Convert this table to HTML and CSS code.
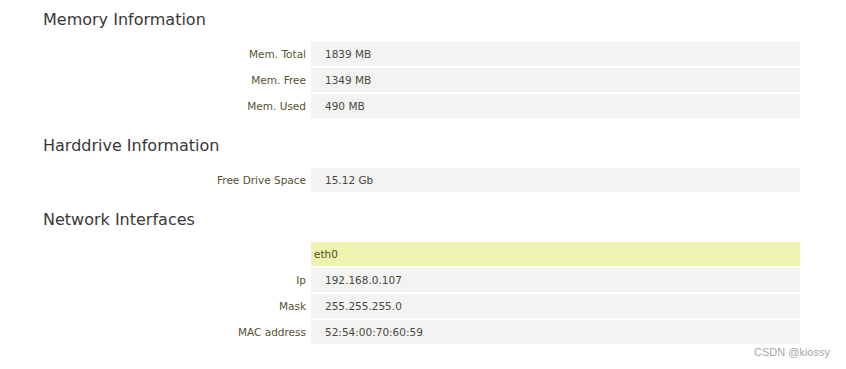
FILE: index.html
```html
<!DOCTYPE html>
<html lang="en">
<head>
<meta charset="utf-8">
<title>System Information</title>
<link rel="stylesheet" href="styles.css">
</head>
<body>
<div class="page">
  <section class="section">
    <h2 class="heading">Memory Information</h2>
    <div class="rows">
      <div class="row"><div class="label">Mem. Total</div><div class="value">1839 MB</div></div>
      <div class="row"><div class="label">Mem. Free</div><div class="value">1349 MB</div></div>
      <div class="row"><div class="label">Mem. Used</div><div class="value">490 MB</div></div>
    </div>
  </section>
  <section class="section">
    <h2 class="heading">Harddrive Information</h2>
    <div class="rows">
      <div class="row"><div class="label">Free Drive Space</div><div class="value">15.12 Gb</div></div>
    </div>
  </section>
  <section class="section">
    <h2 class="heading">Network Interfaces</h2>
    <div class="rows">
      <div class="row"><div class="label"></div><div class="value iface">eth0</div></div>
      <div class="row"><div class="label">Ip</div><div class="value">192.168.0.107</div></div>
      <div class="row"><div class="label">Mask</div><div class="value">255.255.255.0</div></div>
      <div class="row"><div class="label">MAC address</div><div class="value">52:54:00:70:60:59</div></div>
    </div>
  </section>
</div>
<div class="watermark">CSDN @kiossy</div>
</body>
</html>
```
FILE: styles.css
```css
html, body {
  margin: 0;
  padding: 0;
  background: #ffffff;
}
body {
  font-family: "DejaVu Sans", Verdana, sans-serif;
  position: relative;
  width: 846px;
  height: 369px;
  overflow: hidden;
}
.page {
  padding: 10px 0 0 43px;
}
.section {
  margin: 0 0 18px 0;
}
.heading {
  margin: 0;
  font-size: 16px;
  line-height: 20px;
  font-weight: normal;
  color: #383838;
}
.rows {
  margin-top: 12px;
  display: flex;
  flex-direction: column;
  gap: 2px;
}
.row {
  display: grid;
  grid-template-columns: 268px 489px;
  height: 24px;
}
.label {
  font-size: 10.5px;
  line-height: 24px;
  text-align: right;
  padding-right: 5px;
  color: #57522f;
  white-space: nowrap;
}
.value {
  background: #f3f3f3;
  font-size: 10.5px;
  line-height: 24px;
  padding-left: 14px;
  color: #4a4838;
  white-space: nowrap;
}
.value.iface {
  background: #eef3b0;
  padding-left: 3px;
  color: #4f4c2e;
}
.watermark {
  position: absolute;
  left: 754px;
  top: 346px;
  font-family: "Liberation Sans", Arial, sans-serif;
  font-size: 11px;
  line-height: 13px;
  color: #a6a6a6;
}
```
